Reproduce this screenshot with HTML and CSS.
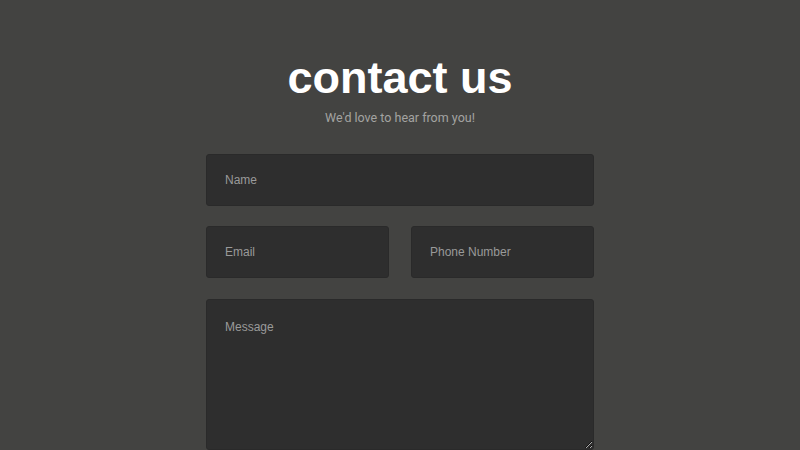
FILE: index.html
```html
<!DOCTYPE html>
<html>
<head>
<meta charset="utf-8">
<link rel="stylesheet" href="styles.css">
</head>
<body>
<main class="page">
  <h1 class="title">contact us</h1>
  <p class="subtitle">We'd love to hear from you!</p>
  <form class="form">
    <input class="field" type="text" placeholder="Name">
    <div class="row">
      <input class="field" type="email" placeholder="Email">
      <input class="field" type="tel" placeholder="Phone Number">
    </div>
    <textarea class="field message" placeholder="Message"></textarea>
  </form>
</main>
</body>
</html>
```
FILE: styles.css
```css
html, body {
  margin: 0;
  background: #434341;
  height: 100%;
  overflow: hidden;
}
.page {
  display: flex;
  flex-direction: column;
  align-items: center;
  padding-top: 52px;
}
.title {
  margin: 0;
  font-family: "Liberation Sans", Arial, sans-serif;
  font-weight: bold;
  font-size: 45px;
  line-height: 52px;
  color: #ffffff;
}
.subtitle {
  margin: 6px 0 0;
  font-family: Roboto, sans-serif;
  font-weight: 400;
  font-size: 12.5px;
  line-height: 16px;
  color: #a3a3a1;
}
.form {
  margin-top: 28px;
  width: 388px;
  display: flex;
  flex-direction: column;
  gap: 20px;
}
.row {
  display: grid;
  grid-template-columns: 1fr 1fr;
  gap: 22px;
}
.field {
  box-sizing: border-box;
  width: 100%;
  height: 52px;
  margin: 0;
  padding: 0 18px;
  background: #2e2e2e;
  border: 1px solid #2a2a2a;
  border-radius: 3px;
  font-family: "Liberation Sans", Arial, sans-serif;
  font-size: 12px;
  color: #ddd;
  outline: none;
}
.field::placeholder {
  color: #9a9a9a;
}
.message {
  margin-top: 1px;
  height: 151px;
  padding: 20px 18px;
  resize: vertical;
  display: block;
}
```
